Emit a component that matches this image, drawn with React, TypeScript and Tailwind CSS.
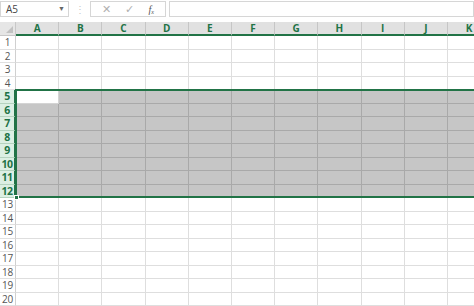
import React from 'react';

const COLS = ['A', 'B', 'C', 'D', 'E', 'F', 'G', 'H', 'I', 'J', 'K'];
const ROWS = Array.from({ length: 20 }, (_, i) => i + 1);
const isSel = (r: number) => r >= 5 && r <= 12;

const App: React.FC = () => {
  return (
    <div className="w-[474px] h-[306px] overflow-hidden bg-white" style={{ fontFamily: '"Open Sans", "Noto Sans", sans-serif' }}>
      {/* Formula bar */}
      <div className="h-[22px] flex items-start pt-[1px]">
        <div className="w-[69px] h-[16px] border border-[#d6d6d6] flex items-center justify-between pl-[5px] pr-[3px]">
          <span className="text-[10px] text-[#444]">A5</span>
          <span className="text-[7px] text-[#666]">▼</span>
        </div>
        <div className="w-[21px] h-[16px] flex items-center justify-center text-[10px] text-[#c8c8c8]">⋮</div>
        <div className="w-[76px] h-[16px] border border-[#d6d6d6] flex items-center justify-around px-[4px] text-[#b0b0b0]">
          <span className="text-[11px]">✕</span>
          <span className="text-[11px]">✓</span>
          <span className="text-[10px] italic text-[#555]" style={{ fontFamily: '"Liberation Serif", serif' }}>f<sub className="text-[6px]">x</sub></span>
        </div>
        <div className="ml-[3px] flex-1 h-[16px] border border-[#d6d6d6]" />
      </div>

      {/* Grid */}
      <div className="relative">
        {/* Column headers */}
        <div className="flex h-[14px]">
          <div className="w-[16px] shrink-0 bg-[#e6e6e6] border-r border-b border-[#c8c8c8] relative overflow-hidden">
            <div className="absolute right-[2px] bottom-[2px] w-0 h-0 border-l-[7px] border-l-transparent border-b-[7px] border-b-[#c2c2c2]" />
          </div>
          {COLS.map((c) => (
            <div
              key={c}
              className="w-[43.2px] shrink-0 bg-[#e1e1e1] border-r border-[#c6c6c6] border-b-2 border-b-[#217346] flex items-center justify-center text-[10px] font-bold text-[#217346]"
            >
              {c}
            </div>
          ))}
        </div>

        {/* Rows */}
        {ROWS.map((r) => {
          const sel = isSel(r);
          return (
            <div key={r} className="flex h-[13.5px]">
              <div
                className={
                  sel
                    ? 'w-[16px] shrink-0 bg-[#dcefe3] border-r-2 border-r-[#217346] border-b border-b-[#b5d3bf] flex items-center justify-center text-[10.5px] font-bold text-[#217346] leading-none tracking-[-0.5px]'
                    : 'w-[16px] shrink-0 bg-white border-r border-r-[#d0d0d0] border-b border-b-[#e0e0e0] flex items-center justify-center text-[10px] text-[#555] leading-none tracking-[-0.3px]'
                }
              >
                {r}
              </div>
              {COLS.map((c) => {
                const active = r === 5 && c === 'A';
                return (
                  <div
                    key={c}
                    className={
                      active
                        ? 'w-[43.2px] shrink-0 bg-white border-r border-b border-[#d4d4d4]'
                        : sel
                        ? 'w-[43.2px] shrink-0 bg-[#c6c6c6] border-r border-b border-[#a9a9a9]'
                        : 'w-[43.2px] shrink-0 bg-white border-r border-b border-[#dedede]'
                    }
                  />
                );
              })}
            </div>
          );
        })}

        {/* Selection outline */}
        <div className="absolute left-[15px] top-[67px] w-[470px] h-[109px] border-2 border-[#217346] pointer-events-none" />
        <div className="absolute left-[14px] top-[173px] w-[5px] h-[5px] bg-[#217346] border border-white" />
      </div>
    </div>
  );
};

export default App;
